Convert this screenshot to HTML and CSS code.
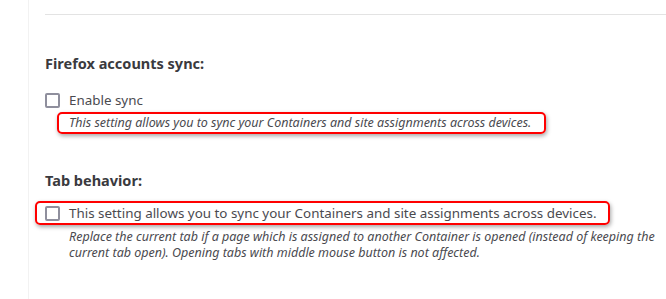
FILE: index.html
```html
<!DOCTYPE html>
<html>
<head>
<meta charset="utf-8">
<link rel="stylesheet" href="styles.css">
</head>
<body>
<div class="page">
  <div class="edge"></div>
  <main class="content">
    <hr class="rule">
    <section class="group first">
      <h3 class="title">Firefox accounts sync:</h3>
      <label class="row">
        <span class="box"></span>
        <span class="label">Enable sync</span>
      </label>
      <p class="note highlight">This setting allows you to sync your Containers and site assignments across devices.</p>
    </section>
    <section class="group second">
      <h3 class="title">Tab behavior:</h3>
      <label class="row highlight row-hl">
        <span class="box"></span>
        <span class="label">This setting allows you to sync your Containers and site assignments across devices.</span>
      </label>
      <p class="desc">Replace the current tab if a page which is assigned to another Container is opened (instead of keeping the current tab open). Opening tabs with middle mouse button is not affected.</p>
    </section>
  </main>
</div>
</body>
</html>
```
FILE: styles.css
```css
html, body {
  margin: 0;
  padding: 0;
  background: #ffffff;
}
body {
  font-family: "Noto Sans", "Open Sans", sans-serif;
  color: #4a4a4f;
  width: 666px;
  height: 299px;
  overflow: hidden;
}
.page {
  display: flex;
  height: 299px;
}
.edge {
  width: 28px;
  flex: none;
  border-right: 1px solid #f2f2f2;
}
.content {
  flex: 1;
  padding-left: 16px;
  padding-top: 14px;
}
.rule {
  margin: 0;
  border: none;
  height: 1px;
  background: #e3e3e3;
}
.group {
  display: flex;
  flex-direction: column;
  align-items: flex-start;
}
.first { margin-top: 38px; }
.second { margin-top: 36px; }
.title {
  margin: 0;
  font-size: 14.5px;
  line-height: 20px;
  font-weight: 700;
  color: #3a3a3e;
}
.row {
  display: flex;
  align-items: center;
  gap: 9px;
  margin-top: 17px;
  font-size: 13.4px;
  line-height: 20px;
}
.box {
  width: 11px;
  height: 11px;
  border: 2px solid #8f8f9d;
  border-radius: 2px;
  flex: none;
}
.highlight {
  border: 2px solid #ff0000;
  border-radius: 5px;
  box-shadow: 1px 2px 4px rgba(0,0,0,0.35);
}
.note {
  margin: 2px 0 0 12px;
  padding: 0 13px 0 10px;
  font-size: 12.5px;
  line-height: 18px;
  font-style: italic;
  color: #4a4a4f;
}
.row-hl {
  margin-left: -10px;
  margin-top: 11px;
  padding: 0 12px 0 8px;
}
.desc {
  margin: 4px 4px 0 24px;
  font-size: 12.5px;
  line-height: 16px;
  font-style: italic;
}
```
